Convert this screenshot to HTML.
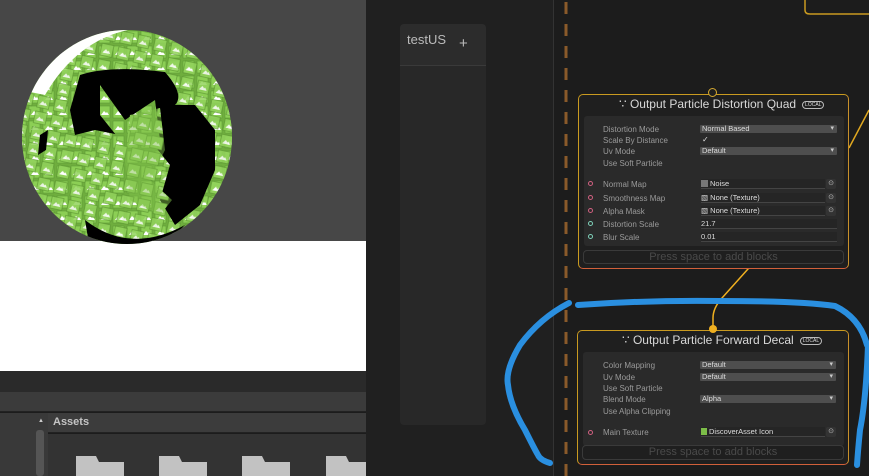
<!DOCTYPE html>
<html><head><style>
*{margin:0;padding:0;box-sizing:border-box}
body{width:869px;height:476px;overflow:hidden;background:#1c1c1c;font-family:"Liberation Sans",sans-serif;position:relative}
.a{position:absolute}
.node{position:absolute;border-radius:5px;background:#1f1f1f}
.title{position:absolute;color:#d8d8d8;font-size:12px;white-space:nowrap}
.loc{display:inline-block;border:1px solid #bbb;border-radius:5px;font-size:5px;padding:0 2px;margin-left:6px;vertical-align:2px;color:#ddd}
.body{position:absolute;background:#2a2a2a;border-radius:3px}
.lb{position:absolute;font-size:8px;color:#9a9a9a;white-space:nowrap}
.dd{position:absolute;height:8px;background:#4e4e4e;font-size:7.5px;color:#ddd;padding-left:2px;line-height:8px;border-radius:1px}
.dd:after{content:"▾";position:absolute;right:3px;top:0;font-size:7px;color:#ccc}
.fld{position:absolute;height:10px;background:#252525;font-size:7.5px;color:#ddd;line-height:10px;border-bottom:1px solid #444}
.pt{position:absolute;width:5px;height:5px;border-radius:50%;border:1.3px solid #d06080}
.pt.g{border-color:#7ed0b8}
.x{position:absolute;width:10px;height:10px;background:#333;border-radius:2px;color:#bbb;font-size:7px;text-align:center;line-height:10px}
.press{position:absolute;border:1px solid #3a3a3a;border-radius:4px;color:#4a4a4a;font-size:11px;text-align:center;line-height:12px}
</style></head><body>
<div class="a" style="left:0;top:0;width:366px;height:245px;background:#474747"></div>
<div class="a" style="left:0;top:241px;width:366px;height:130px;background:#fff"></div>
<svg class="a" style="left:0;top:0" width="366" height="250">
<defs>
<pattern id="p" width="14" height="15" patternUnits="userSpaceOnUse"><rect width="14" height="15" fill="#6fae3e"/><rect x="1" y="1" width="11" height="12" fill="#8ccf55" stroke="#5e9a35" stroke-width=".6"/><path d="M3 10 L6 6 L8 8 L9 7 L11 10Z" fill="#fff"/></pattern>
<pattern id="q" width="17" height="16" patternUnits="userSpaceOnUse" patternTransform="rotate(12) translate(5 3)"><rect x="2" y="2" width="12" height="12" fill="#92d35c" stroke="#5a9430" stroke-width=".7"/><path d="M4 11 L7 7 L9 9 L10 8 L12 11Z" fill="#fff"/></pattern>
<clipPath id="c"><ellipse cx="127" cy="137" rx="105" ry="107"/></clipPath>
</defs>
<g clip-path="url(#c)">
<rect x="0" y="0" width="260" height="260" fill="url(#p)"/>
<rect x="0" y="0" width="260" height="260" fill="url(#q)" opacity=".85"/>
<path d="M80 75 Q110 65 165 72 Q185 95 175 105 L195 105 L215 130 L215 170 L200 205 L175 225 L160 200 L170 165 L150 140 L120 135 L95 130 L75 135 L70 110Z" fill="#000"/>
<path d="M100 85 L125 120 L155 100 L160 140 L140 150 L120 140 L100 115Z" fill="url(#p)"/>
<path d="M130 115 L160 108 L165 150 L150 180 L172 200 L160 215 L130 200 L125 160Z" fill="url(#q)"/>
<path d="M130 115 L160 108 L165 150 L150 180 L172 200 L160 215 L130 200 L125 160Z" fill="#7fc04a" opacity=".5"/>
<path d="M85 220 Q130 255 185 225 L160 250 L90 250Z" fill="#000"/>
<path d="M40 135 L48 130 L46 150 L38 155Z" fill="#000"/>
<path d="M20 90 Q60 30 120 25 L140 28 Q80 35 45 95Z" fill="#fff"/>
</g>
</svg>
<div class="a" style="left:0;top:371px;width:366px;height:21px;background:#2a2a2a"></div>
<div class="a" style="left:0;top:392px;width:366px;height:20px;background:#3b3b3b;border-bottom:1px solid #222"></div>
<div class="a" style="left:0;top:413px;width:48px;height:63px;background:#393939"></div>
<div class="a" style="left:36px;top:430px;width:8px;height:46px;background:#555;border-radius:3px"></div>
<div class="a" style="left:38px;top:418px;font-size:6px;color:#ccc">▲</div>
<div class="a" style="left:48px;top:413px;width:318px;height:20px;background:#3c3c3c;border-bottom:1px solid #222;color:#c4c4c4;font-size:11px;font-weight:bold;padding:3px 5px">Assets</div>
<div class="a" style="left:48px;top:434px;width:318px;height:42px;background:#333"></div>
<svg class="a" style="left:0;top:450px" width="366" height="26">
<g fill="#c2c2c2"><path d="M76 6h20l3 6h25v14H76z"/><path d="M159 6h20l3 6h25v14H159z"/><path d="M242 6h20l3 6h25v14H242z"/><path d="M326 6h20l3 6h25v14H326z"/></g></svg>
<div class="a" style="left:366px;top:0;width:187px;height:476px;background:#202020"></div>
<div class="a" style="left:400px;top:24px;width:86px;height:401px;background:#282828;border-radius:4px"></div>
<div class="a" style="left:400px;top:24px;width:86px;height:42px;background:#2c2c2c;border-bottom:1px solid #3a3a3a;border-radius:4px 4px 0 0"></div>
<div class="a" style="left:407px;top:32px;color:#bbb;font-size:13px;width:40px;overflow:hidden;white-space:nowrap">testUS</div>
<div class="a" style="left:459px;top:35px;color:#bbb;font-size:15px">+</div>
<div class="a" style="left:553px;top:0;width:1px;height:476px;background:#333"></div>
<svg class="a" style="left:0;top:0" width="869" height="476">
<line x1="566" y1="0" x2="566" y2="476" stroke="#8a5a2a" stroke-width="3" stroke-dasharray="12,10" stroke-dashoffset="-2"/>
<path d="M805 0 V10 Q805 14 810 14 H869" fill="none" stroke="#c99a20" stroke-width="1.5"/>
<path d="M849 148 L869 110" stroke="#e0a820" stroke-width="1.5"/>
<path d="M765 250 L722 298 Q713 308 713 318 V328" fill="none" stroke="#f0b020" stroke-width="1.5"/>
</svg>
<div class="node" style="left:578px;top:94px;width:271px;height:175px;border:1.5px solid #c99a20;border-bottom-color:#d2603a;border-right-color:#c8902a"></div>
<div class="a" style="left:708px;top:88px;width:9px;height:9px;border-radius:50%;border:1.5px solid #d4a830;background:#1f1f1f"></div>
<div class="title" style="left:619px;top:97px">∵ Output Particle Distortion Quad<span class="loc">LOCAL</span></div>
<div class="body" style="left:584px;top:116px;width:260px;height:130px"></div>
<div class="lb" style="left:603px;top:125px">Distortion Mode</div>
<div class="dd" style="left:700px;top:125px;width:137px">Normal Based</div>
<div class="lb" style="left:603px;top:136px">Scale By Distance</div>
<div class="a" style="left:702px;top:135px;font-size:8px;color:#ddd">✓</div>
<div class="lb" style="left:603px;top:147px">Uv Mode</div>
<div class="dd" style="left:700px;top:147px;width:137px">Default</div>
<div class="lb" style="left:603px;top:159px">Use Soft Particle</div>
<div class="pt" style="left:588px;top:181px"></div><div class="lb" style="left:603px;top:180px">Normal Map</div>
<div class="fld" style="left:701px;top:179px;width:124px"><span style="display:inline-block;width:7px;height:7px;background:#777;margin-right:2px;vertical-align:-1px"></span>Noise</div><div class="x" style="left:826px;top:179px">⊙</div>
<div class="pt" style="left:588px;top:195px"></div><div class="lb" style="left:603px;top:194px">Smoothness Map</div>
<div class="fld" style="left:701px;top:193px;width:124px">▧ None (Texture)</div><div class="x" style="left:826px;top:193px">⊙</div>
<div class="pt" style="left:588px;top:208px"></div><div class="lb" style="left:603px;top:207px">Alpha Mask</div>
<div class="fld" style="left:701px;top:206px;width:124px">▧ None (Texture)</div><div class="x" style="left:826px;top:206px">⊙</div>
<div class="pt g" style="left:588px;top:221px"></div><div class="lb" style="left:603px;top:220px">Distortion Scale</div>
<div class="fld" style="left:701px;top:219px;width:136px">21.7</div>
<div class="pt g" style="left:588px;top:234px"></div><div class="lb" style="left:603px;top:233px">Blur Scale</div>
<div class="fld" style="left:701px;top:232px;width:136px">0.01</div>
<div class="press" style="left:583px;top:250px;width:261px;height:14px">Press space to add blocks</div>
<div class="node" style="left:577px;top:330px;width:272px;height:135px;border:1.5px solid #c99a20;border-bottom-color:#d2603a;border-right-color:#c8902a"></div>
<div class="a" style="left:709px;top:325px;width:8px;height:8px;border-radius:50%;background:#f0b020"></div>
<div class="title" style="left:622px;top:333px">∵ Output Particle Forward Decal<span class="loc">LOCAL</span></div>
<div class="body" style="left:583px;top:352px;width:261px;height:94px"></div>
<div class="lb" style="left:603px;top:361px">Color Mapping</div><div class="dd" style="left:700px;top:361px;width:136px">Default</div>
<div class="lb" style="left:603px;top:373px">Uv Mode</div><div class="dd" style="left:700px;top:373px;width:136px">Default</div>
<div class="lb" style="left:603px;top:384px">Use Soft Particle</div>
<div class="lb" style="left:603px;top:395px">Blend Mode</div><div class="dd" style="left:700px;top:395px;width:136px">Alpha</div>
<div class="lb" style="left:603px;top:407px">Use Alpha Clipping</div>
<div class="pt" style="left:588px;top:430px"></div><div class="lb" style="left:603px;top:428px">Main Texture</div>
<div class="fld" style="left:701px;top:427px;width:124px"><span style="display:inline-block;width:6px;height:7px;background:#7cbd48;margin-right:2px;vertical-align:-1px"></span>DiscoverAsset Icon</div><div class="x" style="left:826px;top:427px">⊙</div>
<div class="press" style="left:582px;top:445px;width:262px;height:15px">Press space to add blocks</div>
<svg class="a" style="left:0;top:0" width="869" height="476">
<g fill="none" stroke="#2a8fe0" stroke-width="6" stroke-linecap="round" stroke-linejoin="round">
<path d="M569 303 Q540 318 520 345 Q505 370 508 385 Q510 405 525 430 Q535 450 538 455 Q540 460 550 463"/>
<path d="M578 305 Q650 300 720 301 Q800 301 835 306 Q860 318 867 345"/>
<path d="M868 345 Q866 400 860 430 Q858 450 857 465"/>
</g></svg>
</body></html>
